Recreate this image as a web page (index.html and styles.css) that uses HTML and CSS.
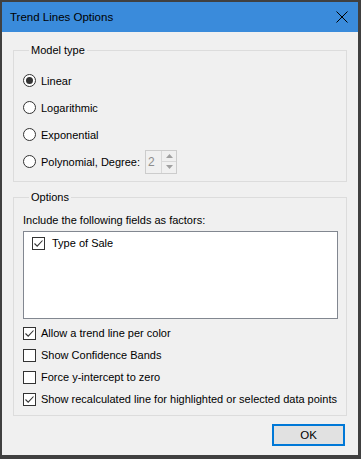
FILE: index.html
```html
<!DOCTYPE html>
<html lang="en">
<head>
  <meta charset="UTF-8">
  <title>Trend Lines Options</title>
  <link rel="stylesheet" href="styles.css">
</head>
<body>
  <div class="window">
    <div class="titlebar">
      <span class="title">Trend Lines Options</span>
      <svg class="close" width="12" height="12" viewBox="0 0 12 12">
        <path d="M0.5 0.5 L11.5 11.5 M11.5 0.5 L0.5 11.5" stroke="#000" stroke-width="1" fill="none"/>
      </svg>
    </div>

    <div class="client">
      <fieldset class="group group-model">
        <legend>Model type</legend>
        <div class="radio-row">
          <span class="radio checked"></span>
          <span>Linear</span>
        </div>
        <div class="radio-row">
          <span class="radio"></span>
          <span>Logarithmic</span>
        </div>
        <div class="radio-row">
          <span class="radio"></span>
          <span>Exponential</span>
        </div>
        <div class="radio-row">
          <span class="radio"></span>
          <span>Polynomial, Degree:</span>
          <div class="spinner">
            <span class="spin-value">2</span>
            <div class="spin-buttons">
              <span class="spin-btn">
                <svg width="7" height="4" viewBox="0 0 7 4"><path d="M0 4 L3.5 0 L7 4 Z" fill="#a0a0a0"/></svg>
              </span>
              <span class="spin-btn">
                <svg width="7" height="4" viewBox="0 0 7 4"><path d="M0 0 L3.5 4 L7 0 Z" fill="#a0a0a0"/></svg>
              </span>
            </div>
          </div>
        </div>
      </fieldset>

      <fieldset class="group group-options">
        <legend>Options</legend>
        <div class="fields-label">Include the following fields as factors:</div>
        <div class="listbox">
          <div class="list-item">
            <span class="check checked">
              <svg width="11" height="11" viewBox="0 0 11 11"><path d="M1.5 5.5 L4.2 8.2 L9.5 2.5" stroke="#333" stroke-width="1.1" fill="none"/></svg>
            </span>
            <span>Type of Sale</span>
          </div>
        </div>

        <div class="check-row">
          <span class="check checked">
            <svg width="11" height="11" viewBox="0 0 11 11"><path d="M1.5 5.5 L4.2 8.2 L9.5 2.5" stroke="#333" stroke-width="1.1" fill="none"/></svg>
          </span>
          <span>Allow a trend line per color</span>
        </div>
        <div class="check-row">
          <span class="check"></span>
          <span>Show Confidence Bands</span>
        </div>
        <div class="check-row">
          <span class="check"></span>
          <span>Force y-intercept to zero</span>
        </div>
        <div class="check-row">
          <span class="check checked">
            <svg width="11" height="11" viewBox="0 0 11 11"><path d="M1.5 5.5 L4.2 8.2 L9.5 2.5" stroke="#333" stroke-width="1.1" fill="none"/></svg>
          </span>
          <span>Show recalculated line for highlighted or selected data points</span>
        </div>
      </fieldset>

      <div class="footer">
        <button class="btn-ok">OK</button>
      </div>
    </div>
  </div>
</body>
</html>
```

FILE: styles.css
```css
body {
  margin: 0;
  background: #404040;
  font-family: "Liberation Sans", Arial, sans-serif;
  font-size: 11px;
  color: #000;
}

.window {
  width: 361px;
  height: 459px;
  box-sizing: border-box;
  border-style: solid;
  border-color: #404040;
  border-width: 2px 3px 4px 2px;
  display: flex;
  flex-direction: column;
}

.titlebar {
  height: 30px;
  background: #3a8bdb;
  display: flex;
  align-items: center;
  justify-content: space-between;
  padding: 0 8px 0 8px;
  flex-shrink: 0;
}

.title {
  font-size: 11.5px;
  margin-top: -1px;
}

.close {
  margin-right: 2px;
  margin-top: -1px;
}

.client {
  flex: 1;
  background: #f0f0f0;
  padding: 10px 11px 0 11px;
}

.group {
  margin: 0;
  padding: 0;
  min-width: 0;
  border: 1px solid #dcdcdc;
}

.group legend {
  margin-left: 6px;
  padding: 0 2px;
  line-height: 16px;
}

.group-model {
  padding: 9px 0 6px 9px;
}

.group-options {
  margin-top: 7px;
  padding: 7px 0 5px 9px;
}

.radio-row {
  height: 27px;
  display: flex;
  align-items: center;
}

.radio {
  width: 13px;
  height: 13px;
  box-sizing: border-box;
  border: 1px solid #333;
  border-radius: 50%;
  background: #fff;
  margin-right: 5px;
  display: flex;
  align-items: center;
  justify-content: center;
}

.radio.checked::after {
  content: "";
  width: 7px;
  height: 7px;
  border-radius: 50%;
  background: #333;
}

.spinner {
  margin-left: 5px;
  width: 32px;
  height: 24px;
  box-sizing: border-box;
  border: 1px solid #cccccc;
  background: #f0f0f0;
  display: flex;
}

.spin-value {
  flex: 1;
  color: #8d8d8d;
  font-size: 12px;
  padding-left: 2px;
  line-height: 22px;
}

.spin-buttons {
  width: 14px;
  display: flex;
  flex-direction: column;
  border-left: 1px solid #d8d8d8;
}

.spin-btn {
  flex: 1;
  display: flex;
  align-items: center;
  justify-content: center;
}

.spin-btn + .spin-btn {
  border-top: 1px solid #d8d8d8;
}

.fields-label {
  line-height: 16px;
}

.listbox {
  margin: 3px 0 3px 0;
  width: 315px;
  height: 88px;
  box-sizing: border-box;
  border: 1px solid #828790;
  background: #fff;
  padding: 1px 0 0 8px;
}

.list-item {
  height: 20px;
  display: flex;
  align-items: center;
}

.list-item .check {
  margin-right: 7px;
}

.check {
  width: 13px;
  height: 13px;
  box-sizing: border-box;
  border: 1px solid #333;
  background: #fff;
  margin-right: 5px;
  display: flex;
  align-items: center;
  justify-content: center;
  flex-shrink: 0;
}

.check-row {
  height: 22px;
  display: flex;
  align-items: center;
}

.footer {
  display: flex;
  justify-content: flex-end;
  padding: 8px 2px 0 0;
}

.btn-ok {
  width: 73px;
  height: 22px;
  box-sizing: border-box;
  border: 2px solid #0078d7;
  background: #e1e1e1;
  font-family: "Liberation Sans", Arial, sans-serif;
  font-size: 11.5px;
  color: #000;
  padding: 0;
}
```
